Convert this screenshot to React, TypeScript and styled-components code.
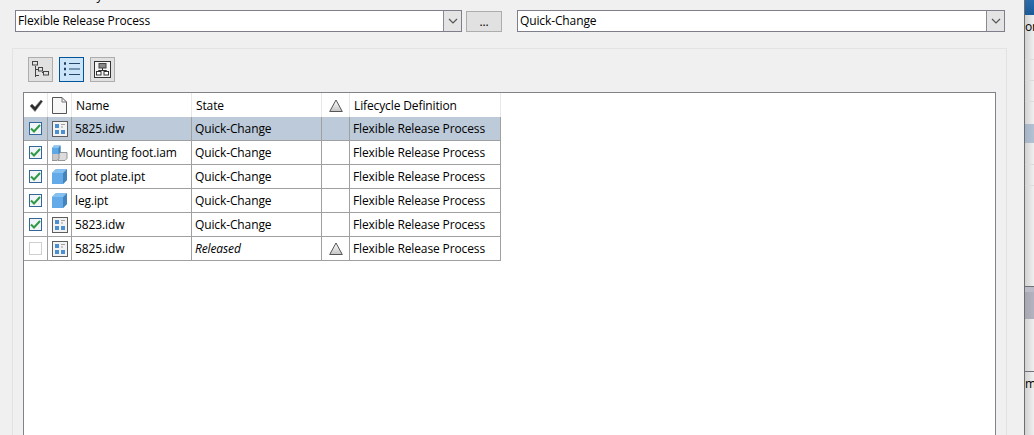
import React from "react";
import styled, { createGlobalStyle } from "styled-components";

const Global = createGlobalStyle`
  html, body { margin: 0; padding: 0; background: #f0f0f0; overflow: hidden; }
  body { font: 12px "Open Sans", "Noto Sans", "Liberation Sans", sans-serif; color: #000; }
`;
const Page = styled.div`display: flex; width: 1034px; height: 435px; overflow: hidden; letter-spacing: -0.12px;`;
const Dialog = styled.div`width: 1024px; flex: none; display: flex; flex-direction: column; min-height: 0;`;
const ClippedLabel = styled.div`height: 4px; overflow: hidden; display: flex; align-items: flex-end; padding-left: 15px; line-height: 16px; white-space: nowrap;`;
const TopRow = styled.div`display: flex; align-items: flex-start; margin: 6px 19px 0 15px; flex: none;`;
const Combo = styled.div<{ $w?: number }>`
  ${p => (p.$w ? `width:${p.$w}px; flex:none;` : "flex:1;")}
  box-sizing: border-box; height: 22px; display: flex; align-items: stretch;
  background: #fff; border: 1px solid #7f7f8c;
`;
const ComboText = styled.div`flex: 1; padding-left: 2px; line-height: 19px;`;
const ComboArrow = styled.div`width: 17px; flex: none; background: #e4e4e4; border-left: 1px solid #8a8a94; display: flex; align-items: center; justify-content: center;`;
const Ellipsis = styled.div`width: 36px; height: 21px; box-sizing: border-box; margin: 1px 15px 0 4px; flex: none; background: #e1e1e1; border: 1px solid #adadad; text-align: center; line-height: 19px;`;
const Panel = styled.div`flex: 1; min-height: 0; margin: 16px 17px -40px 12px; border: 1px solid #e3e3e3; padding: 8px 10px 0; display: flex; flex-direction: column;`;
const Toolbar = styled.div`display: flex; gap: 6px; margin-left: 5px; flex: none;`;
const ToolButton = styled.div<{ $on?: boolean }>`
  width: 25px; height: 25px; box-sizing: border-box; display: flex; align-items: center; justify-content: center;
  background: ${p => (p.$on ? "#cce4f7" : "#e1e1e1")};
  border: 1px solid ${p => (p.$on ? "#005499" : "#adadad")};
`;
const Grid = styled.div`flex: 1; margin-top: 10px; background: #fff; border: 1px solid #82828a;`;
const Row = styled.div<{ $sel?: boolean; $head?: boolean }>`
  display: grid; grid-template-columns: 24px 24px 120px 130px 28px 151px; width: 477px; height: 24px; box-sizing: border-box;
  background: ${p => (p.$sel ? "#bccad9" : "#fff")};
  border-bottom: ${p => (p.$head ? "0" : "1px solid #a0a0a0")};
`;
const Cell = styled.div<{ $head?: boolean; $italic?: boolean; $center?: boolean }>`
  box-sizing: border-box; display: flex; align-items: center; white-space: nowrap;
  padding-left: ${p => (p.$center ? 0 : p.$head ? 4 : 3)}px;
  justify-content: ${p => (p.$center ? "center" : "flex-start")};
  border-right: 1px solid ${p => (p.$head ? "#e8e8e8" : "#a0a0a0")};
  font-style: ${p => (p.$italic ? "italic" : "normal")};
`;
const Check = styled.div<{ $on: boolean }>`
  width: 13px; height: 13px; box-sizing: border-box; display: flex; align-items: center; justify-content: center;
  background: ${p => (p.$on ? "#f2f5f8" : "#fff")};
  border: 1px solid ${p => (p.$on ? "#34689c" : "#cfcfcf")};
`;
const Sidebar = styled.div`flex: 1; border-left: 1px solid #6e6e6e; display: flex; flex-direction: column; overflow: hidden; background: linear-gradient(90deg, #d2d2d2, #f0f0f0);`;
const Strip = styled.div<{ $h: number; $bg?: string; $line?: string }>`
  flex: none; height: ${p => p.$h}px; box-sizing: border-box; overflow: hidden; white-space: nowrap; line-height: ${p => p.$h}px;
  ${p => (p.$bg ? `background:${p.$bg};` : "")}
  ${p => (p.$line ? `border-bottom:1px solid ${p.$line};` : "")}
`;

const Chevron = () => (
  <svg width="10" height="6" viewBox="0 0 10 6"><path d="M1 1l4 4 4-4" fill="none" stroke="#555" strokeWidth="1.2" /></svg>
);
const TreeIcon = () => (
  <svg width="17" height="17" viewBox="0 0 17 17" fill="#e1e1e1" stroke="#444">
    <path d="M3.5 5v11M3.5 8.5H7M3.5 14.5H7M10 11.5h2" />
    <rect x=".5" y=".5" width="5" height="3.5" /><rect x="6.5" y="6.5" width="4" height="3.5" /><rect x="11.5" y="10.5" width="5" height="3.5" />
  </svg>
);
const ListIcon = () => (
  <svg width="17" height="15" viewBox="0 0 17 15" fill="none">
    <path d="M1 1.5h2M1 7h2M1 12.5h2" stroke="#1c3f63" strokeWidth="2.4" />
    <path d="M6 1.5h11M6 7h11M6 12.5h11" stroke="#23466a" strokeWidth="1.2" />
  </svg>
);
const HierIcon = () => (
  <svg width="17" height="17" viewBox="0 0 17 17">
    <rect x=".5" y=".5" width="16" height="16" fill="#f4f4f4" stroke="#333" />
    <rect x="5" y="2.5" width="7" height="4.5" fill="#888" stroke="#444" />
    <path d="M8.5 7v3M4.5 11V9.5h8V11" fill="none" stroke="#333" />
    <rect x="2.5" y="10.5" width="4.5" height="3.5" fill="#fff" stroke="#333" /><rect x="10" y="10.5" width="4.5" height="3.5" fill="#fff" stroke="#333" />
  </svg>
);
const TickHeader = () => (
  <svg width="14" height="13" viewBox="0 0 14 13"><path d="M1 7l2-2 3 3 6-7 1.5 1.5L6 12.5z" fill="#2c2c2c" stroke="#777" strokeWidth=".7" /></svg>
);
const PageIcon = () => (
  <svg width="15" height="17" viewBox="0 0 15 17"><path d="M.5.5h9.5l4.5 4.5v11.5H.5z" fill="#f7f7f7" stroke="#555" /><path d="M10 .5v4.5h4.5" fill="none" stroke="#777" /></svg>
);
const Warn = () => (
  <svg width="14" height="13" viewBox="0 0 14 13">
    <defs><linearGradient id="wg" x1="0" y1="0" x2="0" y2="1"><stop offset="0" stopColor="#fff" /><stop offset="1" stopColor="#c4c4c4" /></linearGradient></defs>
    <path d="M7 1l6.3 11.5H.7z" fill="url(#wg)" stroke="#555" />
  </svg>
);
const Tick = () => (
  <svg width="11" height="9" viewBox="0 0 11 9"><path d="M1 4.5l3 3 6-6.5" fill="none" stroke="#2f9a44" strokeWidth="2" /></svg>
);
const DrawingIcon = () => (
  <svg width="16" height="16" viewBox="0 0 16 16">
    <rect x=".5" y=".5" width="15" height="15" fill="#f2f2f2" stroke="#5e5e5e" />
    <rect x="3" y="3" width="4" height="4" fill="#4a90d0" /><rect x="3" y="9" width="4" height="4" fill="#4a90d0" /><rect x="9" y="9" width="4" height="4" fill="#4a90d0" />
    <path d="M9 3.5h4M9 6h2" stroke="#a0a0a0" />
  </svg>
);
const PartIcon = () => (
  <svg width="15" height="15" viewBox="0 0 15 15">
    <path d="M0 4l4-4h11v11l-4 4H0z" fill="#62aae8" /><path d="M11 4l4-4v11l-4 4z" fill="#4484bd" /><path d="M0 4l4-4h11l-4 4z" fill="#86c0f0" />
  </svg>
);
const AssemblyIcon = () => (
  <svg width="16" height="16" viewBox="0 0 16 16">
    <path d="M6 9.5l2-2h7v6l-2 2H6z" fill="#dcdcdc" stroke="#808080" strokeWidth=".8" /><path d="M0 9.5l2-2h5v6l-2 2H0z" fill="#c8c8c8" stroke="#808080" strokeWidth=".8" />
    <path d="M0 3l2-2.5h6.5V7L6.5 9H0z" fill="#5ea8e6" /><path d="M0 3l2-2.5h6.5L6.5 3z" fill="#8cc4f0" /><path d="M6.5 3l2-2.5V7L6.5 9z" fill="#4080bb" />
  </svg>
);

type Kind = "drawing" | "assembly" | "part";
const kinds: Record<Kind, React.ReactNode> = { drawing: <DrawingIcon />, assembly: <AssemblyIcon />, part: <PartIcon /> };
const rows: { name: string; kind: Kind; state: string; checked: boolean; warn?: boolean; sel?: boolean }[] = [
  { name: "5825.idw", kind: "drawing", state: "Quick-Change", checked: true, sel: true },
  { name: "Mounting foot.iam", kind: "assembly", state: "Quick-Change", checked: true },
  { name: "foot plate.ipt", kind: "part", state: "Quick-Change", checked: true },
  { name: "leg.ipt", kind: "part", state: "Quick-Change", checked: true },
  { name: "5823.idw", kind: "drawing", state: "Quick-Change", checked: true },
  { name: "5825.idw", kind: "drawing", state: "Released", checked: false, warn: true },
];

export default function App() {
  return (
    <Page>
      <Global />
      <Dialog>
        <ClippedLabel>Select the Lifecycle</ClippedLabel>
        <TopRow>
          <Combo $w={447}><ComboText>Flexible Release Process</ComboText><ComboArrow><Chevron /></ComboArrow></Combo>
          <Ellipsis>...</Ellipsis>
          <Combo><ComboText>Quick-Change</ComboText><ComboArrow><Chevron /></ComboArrow></Combo>
        </TopRow>
        <Panel>
          <Toolbar>
            <ToolButton><TreeIcon /></ToolButton>
            <ToolButton $on><ListIcon /></ToolButton>
            <ToolButton><HierIcon /></ToolButton>
          </Toolbar>
          <Grid>
            <Row $head>
              <Cell $head $center><TickHeader /></Cell>
              <Cell $head $center><PageIcon /></Cell>
              <Cell $head>Name</Cell>
              <Cell $head>State</Cell>
              <Cell $head $center><Warn /></Cell>
              <Cell $head>Lifecycle Definition</Cell>
            </Row>
            {rows.map((r, i) => (
              <Row key={i} $sel={r.sel}>
                <Cell $center><Check $on={r.checked}>{r.checked && <Tick />}</Check></Cell>
                <Cell $center>{kinds[r.kind]}</Cell>
                <Cell>{r.name}</Cell>
                <Cell $italic={!r.checked}>{r.state}</Cell>
                <Cell $center>{r.warn && <Warn />}</Cell>
                <Cell>Flexible Release Process</Cell>
              </Row>
            ))}
          </Grid>
        </Panel>
      </Dialog>
      <Sidebar>
        <Strip $h={15} $bg="linear-gradient(180deg,#2b6cab,#1a5a98)" />
        <Strip $h={24}>on</Strip>
        <Strip $h={21} $line="#dcdcdc" />
        <Strip $h={21} $line="#dcdcdc" />
        <Strip $h={21} $line="#dcdcdc" />
        <Strip $h={22} />
        <Strip $h={19} $bg="linear-gradient(90deg,#a4b4c8,#b4c2d2)" />
        <Strip $h={22} $line="#dcdcdc" />
        <Strip $h={21} $line="#dcdcdc" />
        <Strip $h={101} $line="#70707a" />
        <Strip $h={5} $bg="#bcbcc8" />
        <Strip $h={27} $bg="linear-gradient(90deg,#a6a6b4,#b4b4c0)" />
        <Strip $h={53} $line="#70707a" />
        <Strip $h={24}>m</Strip>
      </Sidebar>
    </Page>
  );
}
